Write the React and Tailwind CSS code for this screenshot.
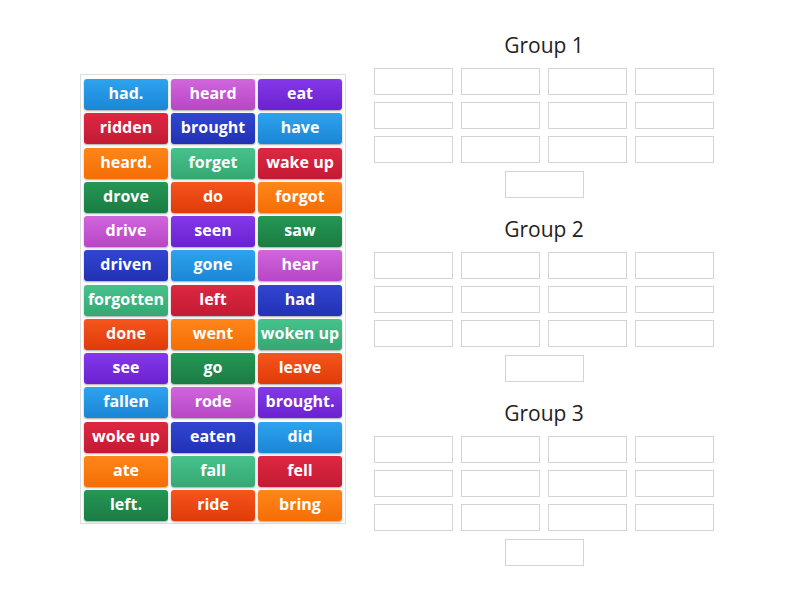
const colors = {
  lb: 'bg-gradient-to-b from-[#2ea3ee] to-[#1a86d6]',
  or: 'bg-gradient-to-b from-[#d066dc] to-[#b845c6]',
  pu: 'bg-gradient-to-b from-[#8538ea] to-[#6a21cf]',
  re: 'bg-gradient-to-b from-[#de2842] to-[#c31a33]',
  db: 'bg-gradient-to-b from-[#3146d2] to-[#2231b4]',
  og: 'bg-gradient-to-b from-[#ff8619] to-[#f46e04]',
  tg: 'bg-gradient-to-b from-[#47c28c] to-[#34a873]',
  dg: 'bg-gradient-to-b from-[#259754] to-[#1b7c43]',
  ro: 'bg-gradient-to-b from-[#f6551c] to-[#df3b08]',
};

const tiles = [
  ['had.', 'lb'], ['heard', 'or'], ['eat', 'pu'],
  ['ridden', 're'], ['brought', 'db'], ['have', 'lb'],
  ['heard.', 'og'], ['forget', 'tg'], ['wake up', 're'],
  ['drove', 'dg'], ['do', 'ro'], ['forgot', 'og'],
  ['drive', 'or'], ['seen', 'pu'], ['saw', 'dg'],
  ['driven', 'db'], ['gone', 'lb'], ['hear', 'or'],
  ['forgotten', 'tg'], ['left', 're'], ['had', 'db'],
  ['done', 'ro'], ['went', 'og'], ['woken up', 'tg'],
  ['see', 'pu'], ['go', 'dg'], ['leave', 'ro'],
  ['fallen', 'lb'], ['rode', 'or'], ['brought.', 'pu'],
  ['woke up', 're'], ['eaten', 'db'], ['did', 'lb'],
  ['ate', 'og'], ['fall', 'tg'], ['fell', 're'],
  ['left.', 'dg'], ['ride', 'ro'], ['bring', 'og'],
];

const Group = ({ title }) => (
  <div className="flex flex-col items-center">
    <div className="h-[28px] text-[21px] leading-[28px] text-[#222]">{title}</div>
    <div className="mt-[9px] grid grid-cols-4 gap-x-[8px] gap-y-[7px]">
      {Array.from({ length: 12 }).map((_, i) => (
        <div key={i} className="w-[79px] h-[27px] border border-[#d4d4d4] bg-white" />
      ))}
    </div>
    <div className="mt-[8px] w-[79px] h-[27px] border border-[#d4d4d4] bg-white" />
  </div>
);

const App = () => {
  return (
    <div
      className="w-[800px] h-[600px] bg-white flex items-start pl-[80px] pt-[31px]"
      style={{ fontFamily: '"Open Sans", "Noto Sans", sans-serif' }}
    >
      <div className="mt-[43px] w-[266px] h-[450px] border border-[#dedede] px-[3px] pt-[4px]">
        <div className="grid grid-cols-3 gap-x-[3px] gap-y-[3.25px]">
          {tiles.map(([word, c], i) => (
            <div
              key={i}
              className={`${colors[c]} h-[31px] pb-[3px] rounded-[3px] shadow-[0_1px_2px_rgba(0,0,0,0.35)] flex items-center justify-center text-white font-bold text-[16px] leading-none whitespace-nowrap`}
            >
              {word}
            </div>
          ))}
        </div>
      </div>
      <div className="ml-[28px] w-[340px] flex flex-col gap-[17px]">
        <Group title="Group 1" />
        <Group title="Group 2" />
        <Group title="Group 3" />
      </div>
    </div>
  );
};

export default App;
